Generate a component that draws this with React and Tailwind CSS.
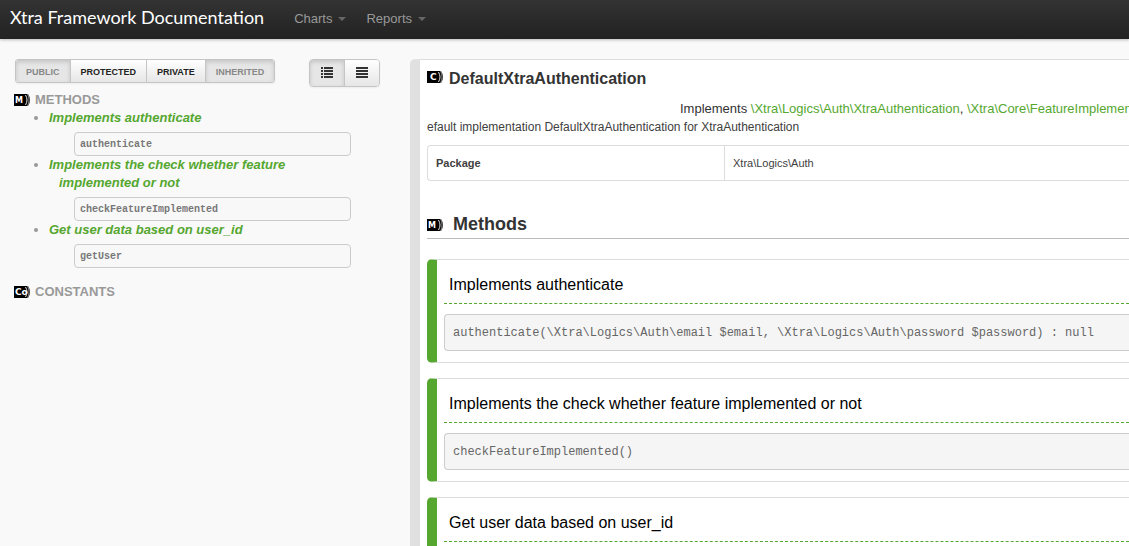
import React, { useState } from 'react';

const sidebarMethods = [
  { title: 'Implements authenticate', name: 'authenticate' },
  { title: 'Implements the check whether feature implemented or not', name: 'checkFeatureImplemented' },
  { title: 'Get user data based on user_id', name: 'getUser' },
];

const methods = [
  {
    title: 'Implements authenticate',
    signature: 'authenticate(\\Xtra\\Logics\\Auth\\email $email, \\Xtra\\Logics\\Auth\\password $password) : null',
  },
  { title: 'Implements the check whether feature implemented or not', signature: 'checkFeatureImplemented()' },
  { title: 'Get user data based on user_id' },
];

const visibilities = ['PUBLIC', 'PROTECTED', 'PRIVATE', 'INHERITED'];

// Black tag with two arcs on the right, used in front of every heading
function TypeIcon({ type }) {
  return (
    <svg width="16" height="12" viewBox="0 0 16 12" className="shrink-0" aria-hidden="true">
      <path d="M0 0H12V12H0Z" fill="#000" />
      <path d="M11 0H14Q16 3 16 6T14 12H11Z" fill="#000" />
      <path d="M11.5 1Q13 3.5 13 6T11.5 11" fill="none" stroke="#fff" strokeWidth="0.9" />
      <path d="M13.5 0Q15 3 15 6T13.5 12" fill="none" stroke="#fff" strokeWidth="0.5" />
      <text
        x={type === 'C' ? 3 : 1}
        y="9"
        fill="#fff"
        className={`font-['DejaVu_Sans',sans-serif] font-bold ${type === 'M' ? 'text-[8px]' : 'text-[9px]'}`}
      >
        {type}
      </text>
    </svg>
  );
}

function ListIcon({ bullets }) {
  return (
    <svg width="12" height="11" viewBox="0 0 12 11" fill="#333" aria-hidden="true">
      {[0, 3, 6, 9].map((y) => (
        <g key={y}>
          {bullets && <rect x="0" y={y} width="2" height="2" />}
          <rect x={bullets ? 3 : 0} y={y} width={bullets ? 9 : 12} height="2" />
        </g>
      ))}
    </svg>
  );
}

function NavItem({ label }) {
  return (
    <a href="#" className="flex items-center gap-[6px] text-[13px] text-[#999]">
      {label}
      <span className="border-x-4 border-t-4 border-x-transparent border-t-[#666]" />
    </a>
  );
}

function MethodCard({ title, signature }) {
  return (
    <article className="mb-[15px] rounded-l-[5px] border-y border-l-10 border-y-[#ddd] border-l-[#55a72f] pb-[11px] pl-[7px]">
      <h3 className="border-b border-dashed border-[#55a72f] pt-[14px] pb-[8px] pl-[5px] text-base leading-[21px] text-black">
        {title}
      </h3>
      {signature && (
        <pre className="mt-[10px] rounded-l-[4px] border-y border-l border-[#ccc] bg-[#f5f5f5] px-2 pt-[9px] pb-[7px] font-['Liberation_Mono',monospace] text-xs leading-[19px] text-[#666]">
          {signature}
        </pre>
      )}
    </article>
  );
}

function App() {
  const [active, setActive] = useState(['PUBLIC', 'INHERITED']);
  const [view, setView] = useState('details');

  function toggle(item) {
    setActive(active.includes(item) ? active.filter((v) => v !== item) : [...active, item]);
  }

  const pressed = 'bg-[#e6e6e6] shadow-[inset_0_2px_4px_rgba(0,0,0,0.15)]';
  const raised = 'bg-linear-to-b from-white to-[#e6e6e6]';

  return (
    <div className="flex h-screen flex-col overflow-hidden bg-[#f9f9f9] font-['Liberation_Sans',Arial,sans-serif] text-[#333]">
      <header className="flex h-[39px] shrink-0 items-center bg-linear-to-b from-[#333] to-[#222] pb-[2px] pl-[10px] shadow-[0_1px_3px_rgba(0,0,0,0.25)]">
        <a href="#" className="mr-[30px] pb-1 font-['Lato',sans-serif] text-lg leading-6 text-white">
          Xtra Framework Documentation
        </a>
        <nav className="flex gap-5">
          <NavItem label="Charts" />
          <NavItem label="Reports" />
        </nav>
      </header>

      <div className="flex min-h-0 flex-1 pt-5">
        <aside className="w-[410px] shrink-0 pr-[30px] pl-[14px] text-[13px] leading-[18px]">
          <div className="flex h-8 items-start justify-between pl-px">
            <div className="flex h-6 rounded-[3px] border border-[#c5c5c5] shadow-[0_1px_2px_rgba(0,0,0,0.05)]">
              {visibilities.map((item) => (
                <button
                  key={item}
                  type="button"
                  onClick={() => toggle(item)}
                  className={`border-l border-[#c5c5c5] px-[10px] pt-[2px] text-[9px] font-bold first:rounded-l-[3px] first:border-l-0 last:rounded-r-[3px] ${
                    active.includes(item) ? `${pressed} text-[#888]` : `${raised} text-[#222]`
                  }`}
                >
                  {item}
                </button>
              ))}
            </div>
            <div className="flex h-7 rounded-[4px] border border-[#c5c5c5] shadow-[0_1px_2px_rgba(0,0,0,0.05)]">
              <button
                type="button"
                aria-label="Detailed list"
                onClick={() => setView('details')}
                className={`rounded-l-[3px] px-[11px] pb-[2px] ${view === 'details' ? pressed : raised}`}
              >
                <ListIcon bullets />
              </button>
              <button
                type="button"
                aria-label="Simple list"
                onClick={() => setView('simple')}
                className={`rounded-r-[3px] border-l border-[#c5c5c5] px-[11px] pb-[2px] ${view === 'simple' ? pressed : raised}`}
              >
                <ListIcon />
              </button>
            </div>
          </div>

          <h2 className="flex items-center gap-[5px] font-bold text-[#999]">
            <TypeIcon type="M" />
            METHODS
          </h2>
          <ul className="mb-[15px] list-disc pr-[29px] pl-[35px] text-[#999]">
            {sidebarMethods.map((method) => (
              <li key={method.name} className="font-bold">
                <a href="#" className="block pl-[10px] indent-[-10px] text-[#55a72f] italic">
                  {method.title}
                </a>
                <code className="mt-[5px] ml-[25px] block h-6 rounded-[4px] border border-[#ccc] bg-[#f8f8f8] px-[5px] pt-px font-['Liberation_Mono',monospace] text-[10px] leading-[22px] text-[#777]">
                  {method.name}
                </code>
              </li>
            ))}
          </ul>
          <h2 className="flex items-center gap-[5px] font-bold text-[#999]">
            <TypeIcon type="Co" />
            CONSTANTS
          </h2>
        </aside>

        <main className="min-w-0 flex-1 overflow-hidden rounded-tl-[5px] border-t border-l-10 border-t-[#ddd] border-l-[#e0e0e0] bg-white pl-[7px]">
          <h1 className="mt-[9px] flex items-start gap-[6px] text-base leading-[20px] font-bold">
            <span className="pt-[2px]">
              <TypeIcon type="C" />
            </span>
            DefaultXtraAuthentication
          </h1>
          <p className="mt-[11px] pl-[253px] text-[13px] leading-[18px] whitespace-nowrap">
            Implements <a href="#" className="text-[#55a72f]">\Xtra\Logics\Auth\XtraAuthentication</a>,{' '}
            <a href="#" className="text-[#55a72f]">\Xtra\Core\FeatureImplemen</a>
          </p>
          <p className="text-xs leading-[18px] text-[#404040]">
            efault implementation DefaultXtraAuthentication for XtraAuthentication
          </p>
          <table className="mt-[9px] w-full table-fixed border-separate border-spacing-0 rounded-l-[4px] border-y border-l border-[#ddd] text-[11px] leading-[18px] text-[#404040]">
            <tbody>
              <tr>
                <th className="w-[296px] p-2 text-left">Package</th>
                <td className="border-l border-[#ddd] px-2 py-2">Xtra\Logics\Auth</td>
              </tr>
            </tbody>
          </table>
          <h2 className="mt-[30px] mb-[20px] flex items-center gap-[10px] border-b border-[#bbb] text-lg leading-[27px] font-bold">
            <TypeIcon type="M" />
            Methods
          </h2>
          {methods.map((method) => (
            <MethodCard key={method.title} title={method.title} signature={method.signature} />
          ))}
        </main>
      </div>
    </div>
  );
}

export default App;
